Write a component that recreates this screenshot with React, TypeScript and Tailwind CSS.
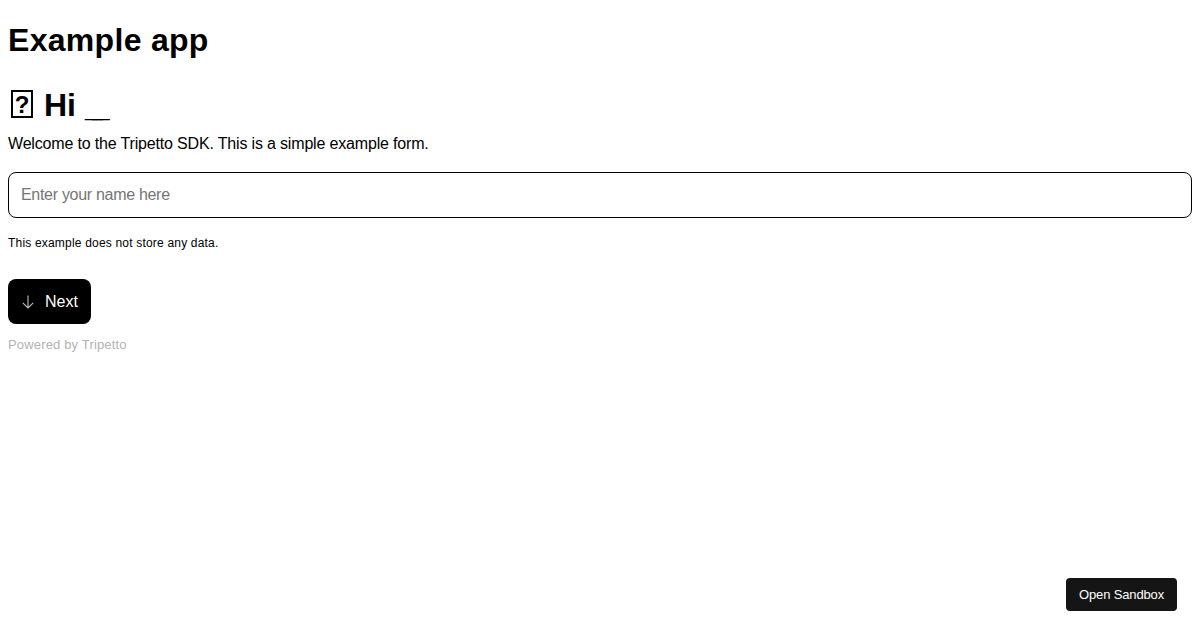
function Tofu() {
  return (
    <span className="-mt-[3px] mr-[11px] ml-[3px] inline-flex h-[28px] w-[22px] items-center justify-center border-2 border-black pt-[2px] text-[24px] leading-none font-bold">
      ?
    </span>
  )
}

function ArrowDownIcon() {
  return (
    <svg width="12" height="14" viewBox="0 0 12 14" fill="none" stroke="currentColor" strokeWidth="1.1">
      <path d="M6 0.5V13M0.8 7.8L6 13L11.2 7.8" />
    </svg>
  )
}

export default function App() {
  return (
    <div className="relative min-h-[630px] bg-white px-2 font-['Liberation_Sans',Arial,sans-serif] text-black">
      <h1 className="pt-[22px] text-[32px] leading-[37px] font-bold tracking-[0.3px]">Example app</h1>

      <form className="flex flex-col" onSubmit={(e) => e.preventDefault()}>
        <h2 className="mt-[28px] flex items-center text-[32px] leading-[37px] font-bold">
          <Tofu />
          Hi <span className="ml-[9px] tracking-[-11px]">_</span>_
        </h2>
        <p className="mt-[11px] text-base leading-[18px] tracking-[-0.17px]">
          Welcome to the Tripetto SDK. This is a simple example form.
        </p>

        <input
          type="text"
          placeholder="Enter your name here"
          className="mt-[19px] h-[46px] w-full rounded-lg border border-black px-3 text-base tracking-[-0.3px] placeholder:text-[#757575] focus:outline-none"
        />
        <p className="mt-[18px] text-xs leading-[14px] tracking-[0.19px]">This example does not store any data.</p>

        <div className="mt-[29px]">
          <button
            type="submit"
            className="flex h-[45px] items-center gap-[11px] rounded-lg bg-black pr-[13px] pl-[14px] text-base text-white"
          >
            <span className="text-[#bdbdbd]">
              <ArrowDownIcon />
            </span>
            Next
          </button>
        </div>

        <p className="mt-[13px] text-[13px] leading-[15px] tracking-[0.16px] text-[#b3b3b3]">Powered by Tripetto</p>
      </form>

      <button className="absolute right-[23px] bottom-[19px] h-[33px] rounded bg-[#151515] px-[13px] text-[13px] tracking-[-0.15px] text-white">
        Open Sandbox
      </button>
    </div>
  )
}
